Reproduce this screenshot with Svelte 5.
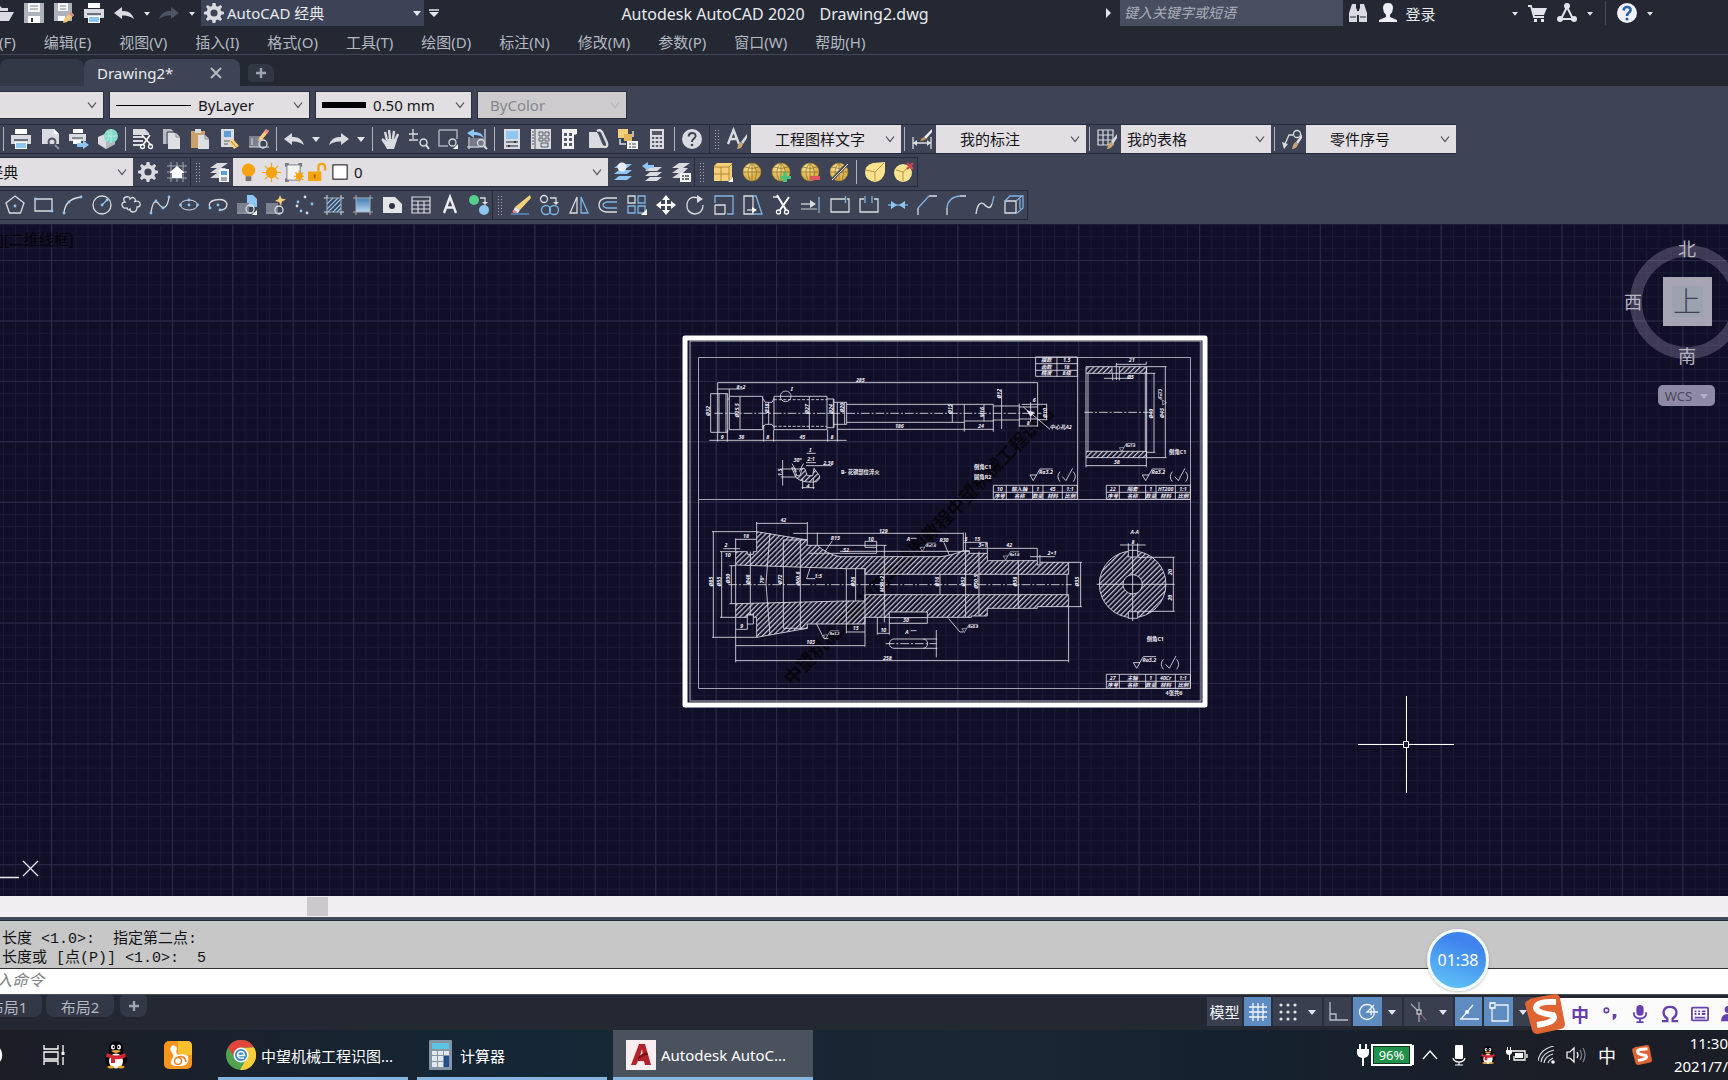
<script lang="ts">
  type Tool = { icon: string; label: string; kind?: "caret" | "sep" };

  const LIGHT = "#d9dbe0";
  const BLUE = "#8ec5f3";
  const GOLD = "#f6cf7a";
  const AMBER = "#f5a310";
  const SLATE = "#3e4455";

  // fill / stroke helpers for the 20x20 icon set
  const f = (d: string, c = LIGHT) => `<path d="${d}" fill="${c}" stroke="none"/>`;
  const s = (d: string, c = LIGHT, w = 1.3) => `<path d="${d}" fill="none" stroke="${c}" stroke-width="${w}"/>`;
  const dot = (x: number, y: number, c = BLUE, r = 1.4) => `<circle cx="${x}" cy="${y}" r="${r}" fill="${c}" stroke="none"/>`;
  const ring = (x: number, y: number, r: number, c = LIGHT, w = 1.3) =>
    `<circle cx="${x}" cy="${y}" r="${r}" fill="none" stroke="${c}" stroke-width="${w}"/>`;

  const undo = "M0 10L8 4V8Q17 7 20 16Q15 12 8 12.500V16Z";
  const redo = "M20 10L12 4V8Q3 7 0 16Q5 12 12 12.500V16Z";
  const gear =
    "M8.500 0H11.500L12 3L14 3.800L16.500 2L18.200 3.800L16.400 6.200L17.200 8.300L20 8.700V11.300L17.200 11.800L16.400 13.800L18 16.300L16.300 18L13.800 16.400L11.900 17.200L11.400 20H8.600L8.100 17.200L6 16.400L3.700 18L1.900 16.200L3.600 13.800L2.800 11.800L0 11.300V8.700L2.800 8.200L3.600 6.100L2 3.700L3.800 2L6.100 3.700L8.100 2.900Z";
  const layers = (c: string) => f("M6 2H19L14 6H1Z", c) + f("M6 8H19L14 12H1Z", c) + f("M6 14H19L14 18H1Z", c);
  const stack = f("M8 1H19L12 6H1Z M8 6H17L12 11H1Z M8 11H14L12 16H1Z");
  const globe =
    `<circle cx="10" cy="10" r="9" fill="url(#gold)" stroke="#a88427" stroke-width=".5"/>` +
    s("M1 10H19M10 1V19M10 1Q3 8 8 18M10 1Q17 8 13 18M3 5Q10 8 17 5", "#94752a", 0.8);
  const search = ring(14.5, 13.5, 3.5, LIGHT, 1.5) + s("M17 16L20 20", LIGHT, 2);
  const brush = f("M20 5L14 13L16 15L20 9Z") + f("M14 13Q11 14 10 20Q15 20 16 15Z", "#c8a475");

  const icons: Record<string, string> = {
    open: f("M0 3H6L8 5H14V8H4L0 15Z") + f("M5 9H20L15 18H0Z"),
    save: f("M0 0H20V20H0Z", "#aeb2ba") + f("M4 0H16V9H4Z", "#f4f4f6") + s("M6 3H14M6 6H14", "#888", 1) + f("M4 13H16V20H4Z", "#fff") + f("M7 15H9V19H7Z", "#333"),
    saveas: f("M0 0H18V18H0Z", "#aeb2ba") + f("M4 0H14V8H4Z", "#f4f4f6") + s("M6 3H12M6 6H12", "#888", 1) + f("M4 13H11V18H4Z", "#fff") + f("M10 16L17 9L20 12L13 19L9 20Z", "#f2c879") + f("M17 9L20 12L18 14L15 11Z", "#d88"),
    print: f("M4 0H16V5H4Z", "#fff") + f("M0 6H20V15H0Z") + f("M3 10H17V12H3Z", "#6a7080") + f("M4 13H16V20H4Z", "#fff") + f("M5 14H15V19H5Z", BLUE),
    undo: f(undo),
    redo: f(redo),
    redoDim: f(redo, "#4c5362"),
    gear: f(gear) + `<circle cx="10" cy="10" r="3.600" fill="${SLATE}" stroke="none"/>`,
    home: s("M0 4H20M0 10H20M0 16H20M4 0V20M10 0V20M16 0V20", "#a3a7b2", 1) + f("M10 4L17 10V11H15V16H5V11H3V10Z", "#fff"),
    preview: f("M2 0H14L19 5V15H2Z") + f("M14 0V5H19Z", "#fff") + ring(12, 13, 3.5, "#4d5362", 2) + s("M15 16L19 20", "#8d929e", 2),
    publish: f("M4 0H14V4H4Z", "#fff") + f("M0 5H17V12H0Z") + s("M3 9H14", "#6a7080", 1.5) + f("M4 11H12V15H4Z", "#fff") + f("M8 14H14V11L20 16L14 20V18H8Z", BLUE),
    cube3d: f("M0 8L9 4L17 8V15L8 20L0 15Z") + f("M8 12L17 8V15L8 20Z", "#b4b7be") + dot(13, 7, "#86dac8", 7) + s("M7 7H19M13 0V14M9 2Q13 6 9 12", "#c6f3e9", 0.7),
    cut: f("M0 0H12L16 4V6H0Z") + s("M0 8H11M0 12H10M0 16H9", LIGHT, 2) + s("M9 6L18 16M17 6L10 16", "#fff", 1.6) + ring(9.5, 17.5, 2, "#fff") + ring(17.500, 17.5, 2, "#fff"),
    copyclip: f("M1 0H9L12 3V15H1Z", "#b9bcc4") + s("M5 17V3H12", SLATE, 1) + f("M6 4H14L18 8V20H6Z", "#dedfe3") + s("M14 4V8H18", "#888", 1),
    paste: f("M0 2H14V19H0Z", "#c9a06c") + f("M4 0H10V4H4Z") + f("M7 6H14L18 10V20H7Z", "#dedfe3") + s("M14 6V10H18", "#888", 1),
    match: f("M1 0H14V18H1Z") + f("M4 2H11V8H4Z", "#5c9fdb") + s("M4 12H10M4 15H8", "#555", 1) + f("M9 13L13 10L19 17L14 20Z", GOLD) + s("M11 12L17 19", "#a67f3f", 1),
    blockedit: f("M0 7H12V18H0Z", "#7b818e") + s("M0 18H20M3 9V16", LIGHT, 1) + ring(14, 15, 4) + f("M10 9L17 0L20 2L13 11L9 12Z", GOLD) + f("M15 3L17 0L20 2L18 5Z", "#e58a85"),
    hand: s("M7 11L5 3M10 10L9 1M13 10L14 2M15 12L18 5M7 14L2 10", LIGHT, 2.4) + f("M6 10H15L17 11L14 20H7Q5 16 2 12L4 11L7 14Z"),
    zoomrt: s("M4 0V10M0 5H9M0 11H9") + search,
    zoomwin: s("M1 1H19V10M1 1V17H10", "#a9adb8", 1.5) + ring(14.5, 13.500, 3.5) + f("M20 15V20H15Z", "#fff"),
    zoomprev: f("M3 9H17V19H3Z", "#747a88") + s("M2 20V8M18 0V18M0 18H12", LIGHT, 1.2) + f("M0 4L7 0V3Q14 2 17 9Q13 6 7 6V9Z", BLUE) + ring(14, 14, 3.5) + s("M17 17L20 20", LIGHT, 2),
    props: f("M2 0H18V20H2Z") + f("M4 2H16V10H4Z", BLUE) + s("M4 13H16M4 17H16", "#5a6070", 1.3) + f("M12 12H14V14H12Z M6 16H8V18H6Z", "#333"),
    design: f("M0 0H20V20H0Z") + s("M4 0V20", "#555", 1) + s("M1 3H3M1 6H3M1 9H3M1 12H3M1 15H3", "#555", 1) + s("M8 3H12V7H8ZM14 3H18V7H14ZM8 9H12V12H8ZM14 9H18V12H14ZM10 14H17V18H10Z", "#555a66", 1),
    palette: f("M2 0H17V5L14 6V20H2Z", "#f2f2f4") + f("M4 4H7V7H4ZM9 4H12V7H9ZM4 9H7V12H4ZM9 9H12V12H9ZM4 14H7V17H4ZM9 14H12V17H9Z", "#555a66"),
    sheets: f("M0 3L8 3L14 19H0Z") + s("M8 2Q11 0 13 3L18 14Q19 18 16 18Q13 18 12 15L8 5", LIGHT, 2.4) + s("M10 5L16 17", "#555a66", 1),
    markup: f("M0 0H10V9H0Z", GOLD) + f("M6 5H14V12H6Z", "#e3b65d") + s("M2 10V15H8M15 2V8", LIGHT, 1.5) + f("M9 12H20V20H9Z", "#f4f4f6") + s("M11 15H13M14 15H18M11 18H13M14 18H18", "#444", 1.2),
    calc: f("M3 0H17V20H3Z") + f("M5 2H15V6H5Z", "#555a66") + s("M5 9H15M5 13H15M5 17H15", "#555a66", 2) + s("M8 7V20M12 7V20", LIGHT, 1.5),
    help: `<circle cx="10" cy="10" r="10" fill="${LIGHT}" stroke="none"/>` + s("M6.500 7.500Q7 4 10 4Q14 4 13.500 7.500Q13 9 11 10.500Q10 11.500 10 13", "#3e4455", 2) + dot(10, 16, "#3e4455", 1.3),
    helpBlue: `<circle cx="10" cy="10" r="10" fill="#f0f2f8" stroke="none"/>` + s("M6.500 7.500Q7 4 10 4Q14 4 13.500 7.500Q13 9 11 10.500Q10 11.500 10 13", "#2d63a8", 2.6) + dot(10, 16, "#2d63a8", 1.6),
    textstyle: s("M1 15L6.500 1L12 15M3 10H10", LIGHT, 2.4) + brush,
    dimstyle: s("M1 8V20M19 8V20M1 14H19") + f("M1 14L5 11V17Z M19 14L15 11V17Z") + f("M20 0L12 8L14 10L20 3Z", "#eee") + f("M12 8Q9 9 8 12Q12 12 14 10Z", "#c8935c"),
    tablestyle: s("M1 1H16V16H1ZM1 6H16M1 11H16M6 1V16M11 1V16", LIGHT, 1.2) + brush,
    mleader: ring(15, 5, 3.5) + s("M11 6H7L3 15") + f("M0 13L6 15L2 20Z") + brush,
    layerprops: stack + f("M10 7H20V20H10Z", "#f4f4f6") + f("M12 9H18V13H12Z", "#5c9fdb") + s("M12 16H18M12 18H18", "#555", 1),
    bulb: dot(10, 7.500, AMBER, 7) + f("M7 14H13V19H7Z", "#77736c"),
    sun: dot(10, 10, AMBER, 6) + s("M10 0V20M0 10H20M3 3L17 17M17 3L3 17", AMBER, 1.3),
    freezevp: f("M2 2H16V18H2Z", "#f2f1f3") + s("M2 2H16V18H2Z", "#777b86", 1) + f("M0 0H4V2H2V4H0ZM14 0H18V4H16V2H14ZM0 16H2V18H4V20H0Z", "#777b86") + dot(15, 14, AMBER, 3.500) + s("M15 8V20M9 14H20M11 10L19 18M19 10L11 18", AMBER, 1.2),
    unlock: f("M0 9H14V19H0Z", AMBER) + s("M11 9V4Q11 1 14.500 1Q18 1 18 4V8", AMBER, 2.4) + f("M6 12H8V16H6Z", "#a96b00"),
    swatch: `<rect x="2" y="2" width="15" height="15" fill="#fff" stroke="#000" stroke-width="1"/>`,
    laymatch: layers(BLUE) + dot(9, 5, "#e8eef5", 4.5),
    layprev: f("M8 5H20L15 9H3Z M8 10H20L15 14H3Z M8 15H20L15 19H3Z") + f("M0 4L6 0V3H12V6H6V9Z", BLUE),
    laystate: stack + f("M9 11H20V20H9Z", "#f4f4f6") + s("M11 14H13M14 14H18M11 17H13M14 17H18", "#444", 1.3),
    box: f("M1 4L4 1H19V16L16 19H1Z", GOLD) + s("M1 5H16V19M16 5L19 2M8 5V19M1 12H16", "#b08a35", 1) + f("M20 15V20H15Z", "#fff"),
    globe,
    globeAdd: globe + f("M12 10H16V14H20V17H16V20H12V17H9V14H12Z", "#4ec07a"),
    globeDel: globe + f("M10 14H20V18H10Z", "#e0565e"),
    globeEdit: globe + s("M2 19L19 1", "#3e4455", 3) + s("M3 18L19 2", "#e6e8ec", 1),
    ball: f("M0 11Q0 3 8 1L20 0V10Q18 19 10 20Q1 19 0 11Z", "#fbe28f") + s("M10 10L19 1M10 10L1 8M10 10V19", "#b08a35", 0.9),
    ballDel: dot(9, 11, "#fbe28f", 9) + s("M9 10L15 5M9 10L2 8M9 10V19", "#b08a35", 0.9) + s("M13 1L19 7M19 1L13 7", "#c9474f", 2.4),
    polygon: s("M10 1L19 8L15.500 18H4.500L1 8Z") + dot(10, 11),
    rect: s("M1 4H18V16H1Z") + dot(1.500, 4) + dot(18, 16),
    arc: s("M1 18Q2 4 18 2") + dot(1, 18) + dot(6, 7) + dot(18, 2),
    circle: ring(10, 10, 9) + s("M10 10L15 5", BLUE, 1.2) + dot(10, 10) + dot(15, 5),
    cloud: s("M6 13Q2 14 1 10Q1 7 4 7Q1 3 5 2Q9 1 9 4Q12 1 14 4Q15 6 13 7Q17 5 19 8Q20 12 16 12Q16 17 12 17Q9 17 9 14Q7 16 6 13Z"),
    spline: s("M1 18Q3 3 8 8Q12 14 15 12Q18 10 19 2") + dot(1, 18) + dot(6, 6) + dot(13, 13) + dot(19, 2),
    ellipse: `<ellipse cx="10" cy="10" rx="8.500" ry="5" fill="none"/>` + dot(10, 10) + dot(1.500, 10) + dot(10, 5) + dot(18.500, 10),
    ellarc: s("M2 13Q-1 7 7 5Q17 3 19 9Q19 15 12 15") + dot(2, 13) + dot(10, 10) + dot(12, 15),
    insert: f("M10 0H16L20 4V12H10Z", BLUE) + f("M0 8H12V17H0Z", "#7b818e") + s("M0 18H20", LIGHT, 1) + ring(13, 14, 4) + f("M20 15V20H15Z", "#fff"),
    makeblock: f("M0 8H12V17H0Z", "#7b818e") + s("M0 18H16", LIGHT, 1) + ring(13, 15, 4) + f("M14 0L15.500 3.500L20 4.500L16 6.500L15 11L13 7L9 6L12.500 4Z", GOLD),
    point: dot(10, 2, LIGHT) + dot(3, 7) + dot(17, 9) + dot(2, 11, LIGHT) + dot(6, 16) + dot(12, 18, LIGHT),
    hatch: s("M3 3H17V17H3Z", "#a9adb8", 1) + s("M0 3H3V0M20 3H17V0M0 17H3V20M20 17H17V20", LIGHT, 1) + s("M3 9L9 3M3 14L14 3M4 17L17 4M9 17L17 9M13 17L17 13", BLUE, 1.1),
    gradient: `<rect x="3" y="3" width="14" height="14" fill="url(#fade)" stroke="none"/>` + s("M0 3H20M0 17H20M3 0V20M17 0V20", "#a9adb8", 1),
    region: f("M1 2H13L20 9V18H1Z", "#e4e5e9") + dot(10, 11, "#30333f", 3),
    table: s("M1 2H19V18H1ZM1 6H19M1 10H19M1 14H19M7 6V18M13 6V18", LIGHT, 1.2),
    mtext: s("M4 18L10 2L16 18M6 12.500H14", "#eceef2", 2.4),
    addsel: dot(5, 5, "#56ce8c", 5) + dot(15, 15, BLUE, 5) + s("M11 3H16V8") + f("M13 7H19L16 10Z"),
    erase: f("M19 0L20 3L9 15L4 12Z", GOLD) + f("M4 12L9 15L7 18L2 17Z", "#eee") + f("M2 15Q0 18 5 18L6 16Z", "#ed7f88") + s("M0 19H18", "#5d9fd4", 1.2),
    copy: ring(4, 4, 3.500) + ring(6, 15, 4.500, "#7fb4e4") + ring(14, 15, 4.500, "#7fb4e4") + s("M10 3H16V7") + f("M13 7H19L16 10Z"),
    mirror: s("M8 2V18H1Z") + s("M12 2V18H19Z", "#7fb4e4"),
    offset: s("M19 3H8Q1 4 1 10Q1 16 8 17H19") + s("M19 7H9Q5 8 5 10Q5 12 9 13H19", "#7fb4e4"),
    array: s("M1 1H8V8H1Z") + s("M11 1H18V8H11ZM1 11H8V18H1ZM11 11H18V18H11Z", "#7fb4e4") + f("M20 14V20H14Z", "#fff"),
    move: s("M10 2V18M2 10H18", "#fff", 2) + f("M10 0L14 5H6ZM10 20L14 15H6ZM0 10L5 6V14ZM20 10L15 6V14Z", "#fff"),
    rotate: s("M13 3Q4 0 2 9Q1 18 10 19Q18 18 18 10") + f("M12 0L18 4L12 8Z"),
    scale: s("M1 10H11V19M1 10V19H11") + s("M1 8V1H19V19H13", "#7fb4e4"),
    stretch: s("M1 1H10V19H1Z") + s("M10 1H13L19 19H10", "#7fb4e4") + f("M9 12L14 15L9 18Z", "#fff") + s("M4 15H10"),
    trim: s("M1 2H7", "#fff", 1.3) + s("M5 0L14 15M17 2L8 15", "#fff", 2) + ring(6.500, 17, 2, "#fff") + ring(14.500, 17, 2, "#fff"),
    extend: s("M0 14H16", "#a9adb8", 1.3) + s("M0 9H10") + f("M9 5L15 9L9 13Z") + s("M18 2V18", "#7fb4e4"),
    breakpt: s("M15 4H1V17H19V4H17") + s("M15.500 1V8", "#7fb4e4"),
    break: s("M5 4H1V17H19V4H15") + s("M6 1V8M13 1V8", "#7fb4e4"),
    join: s("M0 10H20", "#7fb4e4", 1.3) + f("M3 6L9 10L3 14ZM17 6L11 10L17 14Z", BLUE),
    chamfer: s("M1 20V13M12 1H20") + s("M1 13L12 1", "#7fb4e4"),
    fillet: s("M1 20V13M14 1H20") + s("M1 13Q2 2 14 1", "#7fb4e4"),
    blend: s("M1 19Q3 5 9 9Q15 16 17 9") + s("M17 9L19 1", "#7fb4e4"),
    explode: s("M1 6H12V18H1Z") + s("M1 6L6 1H19V13L13 18M12 6L18 1M16 4V14", "#7fb4e4"),
    grid: s("M5 1V19M10 1V19M15 1V19M1 5H19M1 10H19M1 15H19", "#f2f5fa", 1.3),
    snap: [3, 10, 17].map((y) => [3, 10, 17].map((x) => dot(x, y, "#e2e4ea", 1.6)).join("")).join(""),
    ortho: s("M2 0V18H20", "#b9bdc8", 1.3) + s("M2 12H8V18", "#b9bdc8", 1.3),
    polar: ring(9, 10, 7.500, "#eef3fa") + s("M20 10H9L16 3M12 6Q14 8 13 13", "#eef3fa", 1.3),
    iso: s("M2 2L10 10M10 0V20", "#a9adb8", 1.2) + s("M10 10L17 18", "#8d6262", 1.2) + `<rect x="8" y="8" width="4" height="4" fill="${SLATE}" stroke="#e2e4ea"/>`,
    otrack: s("M1 17H20M2 17L14 3", "#eef3fa", 1.3) + dot(8, 10, "#fff", 2),
    osnap: s("M3 6V19H19V3H7", "#eef3fa", 1.3) + s("M1 1H6V6H1Z", "#fff", 1.3),
  };

  const sep: Tool = { icon: "", label: "", kind: "sep" };
  const t = (icon: string, label: string): Tool => ({ icon, label });
  const caret = (label: string): Tool => ({ icon: "", label, kind: "caret" });

  const quick = [
    t("open", "打开"), t("save", "保存"), t("saveas", "另存为"), t("print", "打印"),
    t("undo", "放弃"), caret("放弃列表"), t("redoDim", "重做"), caret("重做列表"),
  ];
  const menus = [
    "文件(F)", "编辑(E)", "视图(V)", "插入(I)", "格式(O)", "工具(T)",
    "绘图(D)", "标注(N)", "修改(M)", "参数(P)", "窗口(W)", "帮助(H)",
  ];
  const standard = [
    t("print", "打印"), t("preview", "打印预览"), t("publish", "发布"), t("cube3d", "三维打印"), sep,
    t("cut", "剪切"), t("copyclip", "复制"), t("paste", "粘贴"), t("match", "特性匹配"), t("blockedit", "块编辑器"), sep,
    t("undo", "放弃"), caret("放弃列表"), t("redo", "重做"), caret("重做列表"), sep,
    t("hand", "平移"), t("zoomrt", "实时缩放"), t("zoomwin", "窗口缩放"), t("zoomprev", "上一个"), sep,
    t("props", "特性"), t("design", "设计中心"), t("palette", "工具选项板"), t("sheets", "图纸集"),
    t("markup", "标记集"), t("calc", "快速计算器"), sep, t("help", "帮助"),
  ];
  const styles = [
    { icon: "textstyle", label: "文字样式", value: "工程图样文字", pad: "wide" },
    { icon: "dimstyle", label: "标注样式", value: "我的标注", pad: "wide" },
    { icon: "tablestyle", label: "表格样式", value: "我的表格", pad: "" },
    { icon: "mleader", label: "多重引线样式", value: "零件序号", pad: "wide" },
  ];
  const layerTools = [t("laymatch", "置为当前"), t("layprev", "上一个图层"), t("laystate", "图层状态")];
  const visual = [
    t("box", "长方体"), t("globe", "球面"), t("globeAdd", "附着"), t("globeDel", "拆离"),
    t("globeEdit", "编辑"), sep, t("ball", "材质"), t("ballDel", "删除材质"),
  ];
  const draw = [
    t("polygon", "多边形"), t("rect", "矩形"), t("arc", "圆弧"), t("circle", "圆"), t("cloud", "修订云线"),
    t("spline", "样条曲线"), t("ellipse", "椭圆"), t("ellarc", "椭圆弧"), t("insert", "插入块"),
    t("makeblock", "创建块"), t("point", "点"), t("hatch", "图案填充"), t("gradient", "渐变色"),
    t("region", "面域"), t("table", "表格"), t("mtext", "多行文字"), t("addsel", "添加选定对象"),
  ];
  const modify = [
    t("erase", "删除"), t("copy", "复制"), t("mirror", "镜像"), t("offset", "偏移"), t("array", "阵列"),
    t("move", "移动"), t("rotate", "旋转"), t("scale", "缩放"), t("stretch", "拉伸"), t("trim", "修剪"),
    t("extend", "延伸"), t("breakpt", "打断于点"), t("break", "打断"), t("join", "合并"),
    t("chamfer", "倒角"), t("fillet", "圆角"), t("blend", "光顺曲线"), t("explode", "分解"),
  ];

  // [x, y, text, rotated] in the units of each view
  type Label = [number, number, string, number?];
  const shaftLabels: Label[] = [
    [571, 170, "285"], [213, 191, "8×2"], [157, 343, "9"], [214, 343, "36"], [293, 343, "8"], [397, 343, "45"],
    [486, 343, "8"], [688, 310, "186"], [933, 310, "24"], [1075, 299, "8"], [1093, 232, "6"],
    [121, 258, "Ø32", 1], [208, 256, "Ø25.5", 1], [296, 250, "Ø18", 1], [417, 252, "Ø27", 1], [488, 252, "Ø24", 1],
    [523, 248, "Ø20", 1], [846, 252, "Ø15", 1], [942, 262, "M16", 1], [992, 206, "Ø12", 1], [1130, 264, "Ø10", 1],
    [1172, 312, "中心孔A2"], [365, 197, "I"], [421, 380, "I"], [423, 409, "2:1"], [383, 412, "30°"],
    [475, 421, "2.36"], [335, 442, "1.5", 1], [414, 488, "4"],
  ];
  const sleeveLabels: Label[] = [
    [395, 112, "21"], [391, 162, "Ø5"], [350, 418, "38"], [460, 266, "Ø40", 1], [493, 264, "Ø45", 1],
    [404, 627, "A-A"], [399, 656, "8"], [516, 741, "20", 1], [516, 818, "20", 1],
  ];
  const spindleLabels: Label[] = [
    [280, 67, "42"], [168, 114, "18"], [108, 142, "2"], [113, 172, "10"], [436, 119, "R15"], [580, 98, "129"], [542, 122, "10"],
    [468, 157, "52"], [762, 127, "R30"], [828, 123, "5"], [862, 123, "15"], [878, 142, "3×1"], [958, 141, "42"],
    [1086, 166, "2×1"], [385, 234, "1:5"], [362, 432, "103"], [592, 479, "258"], [497, 391, "15"], [580, 397, "10"], [648, 366, "30"],
    [655, 123, "A"], [651, 401, "A"], [155, 385, "9"],
    [68, 245, "Ø85", 1], [92, 245, "Ø55", 1], [120, 236, "Ø30", 1], [180, 238, "Ø48", 1], [222, 238, "70°", 1],
    [277, 238, "Ø72", 1], [329, 236, "Ø60.6", 1], [495, 245, "Ø26", 1], [581, 252, "M58×2", 1], [746, 245, "Ø16", 1],
    [825, 245, "Ø52", 1], [864, 245, "Ø50.5", 1], [982, 245, "Ø38", 1], [1168, 245, "Ø35", 1],
  ];
</script>

{#snippet ico(name: string)}
  <svg class="ico" viewBox="0 0 20 20" aria-hidden="true">{@html icons[name]}</svg>
{/snippet}

{#snippet chevron()}
  <svg class="chevron" viewBox="0 0 10 10" aria-hidden="true"><path d="M1 2.500L5 7.500L9 2.500" /></svg>
{/snippet}

{#snippet triangle()}
  <svg class="triangle" viewBox="0 0 8 6" aria-hidden="true"><path d="M0 1H8L4 6Z" /></svg>
{/snippet}

{#snippet tools(list: Tool[])}
  {#each list as item}
    {#if item.kind === "sep"}
      <span class="sep"></span>
    {:else if item.kind === "caret"}
      <button class="drop" type="button" aria-label={item.label}>{@render triangle()}</button>
    {:else}
      <button class="tool" type="button" aria-label={item.label}>{@render ico(item.icon)}</button>
    {/if}
  {/each}
{/snippet}

{#snippet labels(list: Label[])}
  {#each list as [x, y, text, turned]}
    <text {x} {y} transform={turned ? `rotate(-90 ${x} ${y})` : undefined}>{text}</text>
  {/each}
{/snippet}

{#snippet rough(x: number, y: number, value: string, k: number)}
  <g transform="translate({x} {y}) scale({k})">
    <path d="M0 0H20M0 0L10 17L30 -18H68" />
    <text x="48" y="-2">{value}</text>
  </g>
{/snippet}

{#snippet finish(x: number, y: number)}
  {@render rough(x, y, "Ra3.2", 1)}
  <path transform="translate({x} {y})" d="M90 -10Q78 5 90 20M97 5L108 17L128 -20M130 -10Q142 5 130 20" />
{/snippet}

{#snippet titleBlock(x: number, y: number, row: string[])}
  <g transform="translate({x} {y})">
    <path d="M0 0H252V42H0ZM0 21H252M39 0V42M118 0V42M149 0V42M207 0V42" />
    {#each [19, 78, 133, 178, 230] as cx, i}
      <text x={cx} y="17">{row[i]}</text>
      <text x={cx} y="38">{["序号", "名称", "数量", "材料", "比例"][i]}</text>
    {/each}
  </g>
{/snippet}

{#snippet penguin()}
  <svg class="penguin" viewBox="0 0 24 28" aria-hidden="true">
    <path d="M5 25Q1 24 1 17L5 12Q4 0 12 0Q20 0 19 12L23 17Q24 22 20 23Z" fill="#08080c" />
    <ellipse cx="12" cy="20" rx="7" ry="7.500" fill="#fff" />
    <path d="M3 12Q12 17 21 12L22 16Q16 19 11 18V22H7V17L2 16Z" fill="#d22535" />
    <ellipse cx="9" cy="6" rx="2" ry="2.600" fill="#fff" /><ellipse cx="15" cy="6" rx="2" ry="2.600" fill="#fff" />
    <circle cx="9.500" cy="6" r=".9" /><circle cx="14.500" cy="6" r=".9" />
    <path d="M7 10Q12 8 17 10Q12 14 7 10ZM3 26Q6 23 11 26Q7 29 3 26ZM13 26Q18 23 21 26Q17 29 13 26Z" fill="#f2a32c" />
  </svg>
{/snippet}

{#snippet sogou()}
  <svg class="sogou" viewBox="0 0 40 40" aria-hidden="true">
    <path d="M4 6Q5 4 8 4L30 0Q34 0 35 4L40 30Q40 34 36 35L13 40Q8 40 7 36L0 10Q0 7 4 6Z" fill="#de6433" />
    <path d="M31 8Q11 7 11 14Q12 19 28 21Q33 28 12 31" fill="none" stroke="#fff" stroke-width="6" />
  </svg>
{/snippet}

<div class="app">
  <svg class="defs" aria-hidden="true">
    <defs>
      <radialGradient id="gold" cx=".35" cy=".3"><stop offset="0" stop-color="#fbe9a4" /><stop offset="1" stop-color="#d9b24c" /></radialGradient>
      <linearGradient id="fade" x2="0" y2="1"><stop offset="0" stop-color="#3f7cb4" /><stop offset="1" stop-color="#b8d6ef" /></linearGradient>
    </defs>
  </svg>

  <header class="titlebar">
    <div class="quick">{@render tools(quick)}</div>
    <label class="workspace">
      {@render ico("gear")}
      <select aria-label="工作空间"><option>AutoCAD 经典</option></select>
      {@render triangle()}
    </label>
    <button class="customize" type="button" aria-label="自定义快速访问工具栏">
      <svg viewBox="0 0 10 8"><path d="M0 1H10" stroke-width="1.500" /><path d="M0 3H10L5 8Z" stroke="none" /></svg>
    </button>
    <h1><span>Autodesk AutoCAD 2020</span><span>Drawing2.dwg</span></h1>
    <div class="infocenter">
      <svg class="play" viewBox="0 0 5 10"><path d="M0 0L5 5L0 10Z" /></svg>
      <input type="search" placeholder="键入关键字或短语" aria-label="搜索" />
      <button class="tool" type="button" aria-label="查找">
        <svg class="ico" viewBox="0 0 20 20"><path d="M4 1H8V5L9 7V19H1V10ZM12 1H16L19 10V19H11V7L12 5ZM9 8H11V12H9Z" fill="#d9dbe0" stroke="none" /><path d="M2 14H8M12 14H18" stroke="#232833" stroke-width="1" /></svg>
      </button>
      <button class="signin" type="button">
        <svg class="ico" viewBox="0 0 20 20"><path d="M10 0Q15 0 15 5Q15 9 12 12V14L19 17V19H1V17L8 14V12Q5 9 5 5Q5 0 10 0Z" fill="#eceef2" stroke="none" /></svg>
        登录
      </button>
      <button class="drop" type="button" aria-label="登录选项">{@render triangle()}</button>
      <button class="tool" type="button" aria-label="应用商店">
        <svg class="ico" viewBox="0 0 20 20"><path d="M1 3H4L7 14H17" fill="none" stroke="#e2e4ea" stroke-width="1.800" /><path d="M5 5H20L17 12H7ZM7 16H10V19H7ZM14 16H17V19H14Z" fill="#e2e4ea" stroke="none" /></svg>
      </button>
      <button class="tool" type="button" aria-label="保持连接">
        <svg class="ico" viewBox="0 0 20 20"><path d="M10 4L4 16H16Z" fill="none" stroke="#e2e4ea" stroke-width="2" /><circle cx="10" cy="3" r="3" fill="#e2e4ea" stroke="none" /><circle cx="3" cy="16" r="3" fill="#e2e4ea" stroke="none" /><circle cx="17" cy="16" r="3" fill="#e2e4ea" stroke="none" /></svg>
      </button>
      <button class="drop" type="button" aria-label="连接选项">{@render triangle()}</button>
      <span class="rule"></span>
      <button class="tool" type="button" aria-label="帮助">{@render ico("helpBlue")}</button>
      <button class="drop" type="button" aria-label="帮助选项">{@render triangle()}</button>
    </div>
  </header>

  <nav class="menubar">
    {#each menus as menu}
      <button type="button">{menu}</button>
    {/each}
  </nav>

  <div class="filetabs">
    <span class="filetab idle"></span>
    <div class="filetab">
      <span>Drawing2*</span>
      <button type="button" aria-label="关闭">
        <svg viewBox="0 0 12 12"><path d="M1 1L11 11M11 1L1 11" /></svg>
      </button>
    </div>
    <button class="newtab" type="button" aria-label="新图形">
      <svg viewBox="0 0 12 12"><path d="M6 1V11M1 6H11" /></svg>
    </button>
  </div>

  <div class="panel">
    <div class="row properties">
      <label class="combo color"><select aria-label="颜色"><option></option></select>{@render chevron()}</label>
      <label class="combo linetype">
        <span class="line"></span>
        <select aria-label="线型"><option>ByLayer</option></select>{@render chevron()}
      </label>
      <label class="combo weight">
        <span class="line thick"></span>
        <select aria-label="线宽"><option>0.50 mm</option></select>{@render chevron()}
      </label>
      <label class="combo plot off"><select aria-label="打印样式" disabled><option>ByColor</option></select>{@render chevron()}</label>
    </div>

    <div class="row">
      <div class="toolbar standard"><span class="sep"></span>{@render tools(standard)}</div>
      <div class="toolbar">
        <span class="grip"></span>
        {#each styles as style, i}
          {#if i > 0}<span class="sep"></span>{/if}
          <button class="tool" type="button" aria-label={style.label}>{@render ico(style.icon)}</button>
          <label class="combo style {style.pad}">
            <select aria-label={style.label}><option>{style.value}</option></select>{@render chevron()}
          </label>
        {/each}
      </div>
    </div>

    <div class="row">
      <div class="toolbar spaces">
        <label class="combo"><select aria-label="工作空间列表"><option>AutoCAD 经典</option></select>{@render chevron()}</label>
        {@render tools([t("gear", "工作空间设置"), t("home", "我的工作空间")])}
      </div>
      <div class="toolbar">
        <span class="grip"></span>
        {@render tools([t("layerprops", "图层特性")])}
        <label class="combo layer">
          {#each ["bulb", "sun", "freezevp", "unlock", "swatch"] as name}{@render ico(name)}{/each}
          <select aria-label="图层"><option>0</option></select>{@render chevron()}
        </label>
        {@render tools(layerTools)}
      </div>
      <div class="toolbar"><span class="grip"></span>{@render tools(visual)}</div>
    </div>

    <div class="row">
      <div class="toolbar">{@render tools(draw)}</div>
      <div class="toolbar"><span class="grip"></span>{@render tools(modify)}</div>
    </div>
  </div>

  <main class="canvas">
    <svg class="model" aria-label="模型空间">
      <defs>
        <pattern id="minor" x="51.300" y="36.300" width="12.083" height="12.083" patternUnits="userSpaceOnUse">
          <path d="M.5 0V12.083M0 .5H12.083" stroke="#1c1936" />
        </pattern>
        <pattern id="major" x="51" y="36" width="60.417" height="60.417" patternUnits="userSpaceOnUse">
          <path d="M.5 0V60.417M0 .5H60.417" stroke="#2c2948" />
        </pattern>
        <pattern id="section" width="11" height="11" patternUnits="userSpaceOnUse" patternTransform="rotate(45)">
          <path d="M2 0V11" stroke="#e6e4ee" stroke-width="3.200" />
        </pattern>
      </defs>
      <rect width="100%" height="100%" fill="url(#minor)" />
      <rect width="100%" height="100%" fill="url(#major)" />

      <text class="watermark" transform="translate(792 462) rotate(-46)">中望机械工程识图与绘图教程中望机械工程识图</text>

      <rect x="685" y="114" width="520" height="367" fill="none" stroke="#fff" stroke-width="5" stroke-linejoin="round" />
      <rect x="690" y="117" width="511" height="360" fill="none" stroke="#b5b3c0" />
      <path d="M698.500 133.500H1190.500V464.500H698.500ZM698.500 275.500H1190.500M1077.500 133.500V275.500" fill="none" stroke="#a3a1b2" />

      <!-- input shaft -->
      <g class="view" transform="translate(670 101) scale(.3333)">
        <path d="M1097 96H1222V154H1097ZM1097 116H1222M1097 136H1222M1161 96V154" />
        <path d="M143 173H1103M143 173V350M1103 173V305M122 206H173V322H122ZM147 206V322M168 206V322M178 192V214M143 192H220" />
        <path d="M173 222H178M178 214H278V314H178ZM278 220L286 232H306L312 220M278 308L286 298H306L312 308M312 214H471V314H312ZM471 222H492V308H471M492 232H530V298H492M502 232V350M530 238H883M530 292H883M883 238H970V288H883ZM970 243H1048M970 285H1048M1048 246H1103M1048 282H1103M1048 236V305" />
        <path d="M118 346H530M172 314V350M281 300V350M311 314V350M473 314V350M502 313H970M883 288V320M970 285V320M1048 303H1103M1055 238H1130M1130 236V284M1103 284H1132M1060 246L1140 313" />
        <path d="M210 216V312M296 232V298M418 214V314M490 222V306M524 232V298M847 238V292M942 238V290M995 193V312M1082 232V290" />
        <path d="M312 224H471M312 304H471" stroke-dasharray="9 5" />
        <path d="M133 265H1115" stroke-dasharray="26 6 6 6" />
        <circle cx="347" cy="214" r="16" />
        <path d="M1072 258L1092 262L1082 274Z" fill="#e4e2ec" />
        <path d="M365 428L378 458Q400 476 440 470Q456 458 444 446L432 430L428 452H412L404 430H396L390 452H380L374 430Z" fill="url(#section)" />
        <path d="M410 385H437M408 413H438M338 405V482M332 432H400M332 456H380M398 460V492M430 460V492M395 488H434M408 422H485M366 416L380 440M400 416L388 440" />
        {@render labels(shaftLabels)}
        <text class="note" x="571" y="447">B- 花键部位淬火</text>
        <text class="note" x="938" y="433">倒角C1</text>
        <text class="note" x="938" y="462">圆角R2</text>
        {@render finish(1080, 450)}
        {@render titleBlock(970, 481, ["10", "输入轴", "1", "45", "1:1"])}
        <text x="1129" y="112">模数</text><text x="1190" y="112">1.5</text>
        <text x="1129" y="131">齿数</text><text x="1190" y="131">18</text>
        <text x="1129" y="151">精度</text><text x="1190" y="151">8级</text>
      </g>

      <!-- sleeve and A-A section -->
      <g class="view" transform="translate(1000 101) scale(.3333)">
        <path d="M258 125H336V145H258ZM358 125H439V145H358ZM258 379H439V398H258Z" fill="url(#section)" />
        <path d="M258 145V379M264 145V379M436 145V379M440 125V398M336 125H358M336 145H358" />
        <path d="M439 125H500M439 398H500M496 125V398M439 145H466M439 382H466M462 145V382M258 398V427M439 398V427M258 422H439M349 118H439V110M349 114V165M312 160H400M338 145V166M358 145V166" />
        <path d="M253 262H446" stroke-dasharray="26 6 6 6" />
        {@render rough(358, 368, "Ra1.6", 0.7)}
        <g transform="rotate(-90 494 240)">{@render rough(494, 234, "Ra3.2", 0.7)}</g>
        <text class="note" x="533" y="388">倒角C1</text>
        {@render finish(427, 450)}
        {@render titleBlock(319, 481, ["22", "隔套", "1", "HT200", "1:1"])}

        <circle cx="398" cy="778" r="100" fill="url(#section)" />
        <circle cx="398" cy="778" r="29" fill="#110e28" />
        <path d="M385 676H413V696H385ZM385 860H413V880H385Z" fill="#110e28" />
        <path d="M290 778H524M398 660V888M414 697H524M414 859H524M520 697V859M360 660H437M385 655V676M413 655V676" />
        {@render labels(sleeveLabels)}
        <text class="note" x="466" y="947">倒角C1</text>
        {@render finish(400, 1013)}
        {@render titleBlock(319, 1048, ["27", "主轴", "1", "40Cr", "1:1"])}
        <text class="note" x="522" y="1110">4张共6</text>
      </g>

      <!-- spindle -->
      <g class="view" transform="translate(690 276) scale(.3333)">
        <path d="M137 195V155H172V163H190V155H200V95L352 120V136H382Q410 162 450 170H750Q780 168 820 152H838V160H892V182H1042V195H1050V187H1136V223H525V206H469Z" fill="url(#section)" />
        <path d="M137 311L469 303H525V284H1136V320H1042V325H892V348H844V352H525V372H352V385L200 412V352H190V343H172V352H137Z" fill="url(#section)" />
        <path d="M172 345H190V372H172ZM598 336H712V353H598Z" fill="#110e28" />
        <path d="M137 195V311M469 206V303M525 206V440M1131 223V284M181 155V345M240 100L228 250L240 405M280 120V385M331 120V385M497 206V303M583 136V367M750 223V284M827 98V352M867 155V348M985 182V325M280 120H352M280 385H352" />
        <path d="M115 254H1145" stroke-dasharray="26 6 6 6" />
        <path d="M200 66V95M352 66V120M200 70H352M382 98V136M820 98V152M382 100H820M310 100H382M137 115V155M137 118H200M100 146H150M355 160H560M382 136H590M450 154H838M525 124H560V160M525 142H560M525 124V142M820 127H892V160M838 145H892M892 145H1042V182M1020 170H1095M1050 165V187" />
        <path d="M70 95V412M66 95H200M66 412H200M95 155V352M90 155H137M90 352H137M124 197V311M118 197H137M118 311H137M1172 187V320M1136 187H1176M1136 320H1176" />
        <path d="M137 352V487M137 437H525M137 482H1136M1136 320V487M469 303V400M469 396H525M137 388H172V372M562 352V404M598 353V404M562 400H598M598 370H712V353" />
        <path d="M427 122L405 155M762 128L778 165M360 205L350 236H375M380 372L402 416H415M776 356L810 396H820M662 115H680M662 392H680" />
        <rect x="598" y="417" width="115" height="28" rx="14" />
        <path d="M587 431H740" stroke-dasharray="26 6 6 6" />
        <path d="M700 417H742M700 445H742M739 390V472" />
        {@render rough(690, 142, "Ra1.6", 0.7)}
        {@render rough(940, 168, "Ra1.6", 0.7)}
        {@render rough(400, 405, "Ra3.2", 0.7)}
        {@render rough(816, 386, "Ra0.8", 0.7)}
        {@render labels(spindleLabels)}
      </g>

      <path d="M1358 520.500H1403M1409 520.500H1454M1406.500 472V517M1406.500 524V569M1403.500 517.500H1408.500V523.500H1403.500Z" fill="none" stroke="#fff" />
    </svg>

    <span class="viewmode">][二维线框]</span>

    <div class="viewcube">
      <svg class="compass" viewBox="0 0 116 128">
        <circle cx="58" cy="64" r="51" fill="none" stroke="#a9a3bd" stroke-opacity=".3" stroke-width="12" />
        <rect x="34" y="39" width="49" height="49" fill="#a7a4b4" />
        <rect x="43" y="48" width="31" height="31" fill="#9da2af" />
        <text x="58" y="74" class="top">上</text>
        <text x="58" y="18">北</text>
        <text x="4" y="71">西</text>
        <text x="58" y="125">南</text>
      </svg>
      <button type="button">WCS {@render triangle()}</button>
    </div>

    <svg class="ucs" viewBox="0 0 40 20"><path d="M0 17.500H19M23 1L38 16M38 1L23 16" /></svg>
  </main>

  <div class="scrollbar"><span class="thumb"></span></div>

  <section class="command">
    <pre>长度 &lt;1.0&gt;:  指定第二点:
长度或 [点(P)] &lt;1.0&gt;:  5</pre>
    <input type="text" placeholder="键入命令" aria-label="命令行" />
  </section>

  <div class="statusbar">
    <div class="layouts">
      <button type="button">布局1</button>
      <button type="button">布局2</button>
      <button class="add" type="button" aria-label="新建布局"><svg viewBox="0 0 12 12"><path d="M6 1V11M1 6H11" /></svg></button>
    </div>
    <div class="toggles">
      <button class="space" type="button">模型</button>
      <button class="on" type="button" aria-label="栅格">{@render ico("grid")}</button>
      <button type="button" aria-label="捕捉">{@render ico("snap")}</button>
      <button class="more" type="button" aria-label="捕捉选项">{@render triangle()}</button>
      <button type="button" aria-label="正交">{@render ico("ortho")}</button>
      <button class="on" type="button" aria-label="极轴追踪">{@render ico("polar")}</button>
      <button class="more" type="button" aria-label="极轴选项">{@render triangle()}</button>
      <button type="button" aria-label="等轴测草图">{@render ico("iso")}</button>
      <button class="more" type="button" aria-label="等轴测选项">{@render triangle()}</button>
      <button class="on" type="button" aria-label="对象捕捉追踪">{@render ico("otrack")}</button>
      <button class="on" type="button" aria-label="对象捕捉">{@render ico("osnap")}</button>
      <button class="more" type="button" aria-label="对象捕捉选项">{@render triangle()}</button>
    </div>
  </div>

  <footer class="taskbar">
    <button class="launch" type="button" aria-label="Cortana"><svg viewBox="0 0 24 24"><circle cx="12" cy="12" r="10" fill="none" stroke="#fff" stroke-width="2.500" /></svg></button>
    <button class="launch" type="button" aria-label="任务视图">
      <svg viewBox="0 0 24 24"><path d="M2 2V6H16V2M2 22V18H16V22M2 9H16V16H2ZM21 2V9M21 14V22" fill="none" stroke="#fff" stroke-width="1.300" /><path d="M19.500 9H22.500V12H19.500Z" fill="#fff" /></svg>
    </button>
    <button class="launch" type="button" aria-label="QQ">{@render penguin()}</button>
    <button class="launch" type="button" aria-label="UC浏览器">
      <svg class="uc" viewBox="0 0 28 28">
        <rect width="28" height="28" rx="5" fill="#f9951d" /><path d="M14 0H23Q28 0 28 5V14H14Z" fill="#fbc02d" />
        <path d="M9 4Q4 7 8 12Q11 15 8 18Q4 25 13 25H18Q26 24 24 15Q20 12 14 14Q11 11 13 8Q13 5 9 4Z" fill="#fff" />
        <circle cx="14" cy="20" r="3.500" fill="none" stroke="#f07c1c" stroke-width="1.500" /><path d="M14 16Q21 14 22 21" fill="none" stroke="#f07c1c" stroke-width="1.500" />
      </svg>
    </button>
    <button class="task" type="button">
      <svg viewBox="0 0 30 30">
        <circle cx="15" cy="15" r="15" fill="#4fa350" /><path d="M2 7.500A15 15 0 0 1 28 7.500H15L9 18Z" fill="#e2453a" /><path d="M28 7.500A15 15 0 0 1 14 30L21 18L17 8Z" fill="#fbcd3a" />
        <circle cx="15" cy="15" r="7.500" fill="#fff" /><circle cx="15" cy="15" r="6" fill="#3989c9" /><path d="M11.500 15.500H18.500Q18 11.500 15 11.500Q11.500 12 11.500 15.500Q12 19 18 18" fill="none" stroke="#fff" stroke-width="1.600" />
      </svg>
      中望机械工程识图...
    </button>
    <button class="task" type="button">
      <svg viewBox="0 0 30 30">
        <rect x="4" width="23" height="30" rx="1" fill="#8494a5" /><rect x="7" y="3" width="17" height="6" fill="#5ec6e4" />
        <path d="M7 11H12V15H7ZM13 11H18V15H13ZM19 11H24V15H19ZM7 16H12V21H7ZM13 16H18V21H13ZM7 22H12V27H7ZM13 22H18V27H13Z" fill="#e3e8ee" /><rect x="19" y="16" width="5" height="11" fill="#1f4f8c" />
      </svg>
      计算器
    </button>
    <button class="task active" type="button">
      <svg viewBox="0 0 30 30">
        <rect width="30" height="30" fill="#fbeeee" /><path d="M5 25L13 4H19L25 25H19L18 21H12L10 25ZM14 16H17L16 9Z" fill="#b3232b" /><path d="M12 17Q16 13 21 12L22 15Q17 15 12 20Z" fill="#7d1219" />
      </svg>
      Autodesk AutoC...
    </button>

    <div class="tray">
      <svg class="plug" viewBox="0 0 12 24"><path d="M3 1V6M9 1V6" stroke="#fff" stroke-width="2" /><path d="M0 6H12V10Q12 14 7 15V23H5V15Q0 14 0 10Z" fill="#fff" /></svg>
      <span class="battery">96%</span>
      <svg class="up" viewBox="0 0 16 12"><path d="M1 10L8 2L15 10" /></svg>
      <svg class="mic" viewBox="0 0 14 22"><rect x="3" y="1" width="8" height="14" rx="1" fill="#fff" /><path d="M1 14Q2 18 7 18Q12 18 13 14M7 18V21M3 21H11" fill="none" stroke="#fff" stroke-width="1.200" /></svg>
      {@render penguin()}
      <svg class="cell" viewBox="0 0 22 18"><path d="M6 5H19V14H8V10M21 8V12" fill="none" stroke="#fff" stroke-width="1.300" /><path d="M9 7H17V12H9ZM0 4H6V7Q5 9 3 9Q1 9 0 7ZM1 1H2V4H1ZM4 1H5V4H4ZM3 9H4V14H3Z" fill="#fff" /></svg>
      <svg class="wifi" viewBox="0 0 18 18"><path d="M10 17Q11 14 15 12M6 17Q7 10 15 8M3 16Q4 7 16 4M0 15Q2 3 16 0" fill="none" stroke="#dfe2e6" stroke-width="1.200" /><circle cx="15" cy="16" r="1.800" fill="#fff" /></svg>
      <svg class="volume" viewBox="0 0 22 18"><path d="M1 6H4L8 2V16L4 12H1ZM11 6Q13 9 11 12" fill="none" stroke="#fff" stroke-width="1.200" /><path d="M14 4Q17 9 14 14M17 2Q21 9 17 16" fill="none" stroke="#7d828a" stroke-width="1.200" /></svg>
      <span class="ime">中</span>
      {@render sogou()}
    </div>
    <div class="clock"><span>11:30</span><span>2021/7/</span></div>
  </footer>

  <div class="imebar">
    {@render sogou()}
    <button type="button">中</button>
    <button type="button" aria-label="标点"><svg viewBox="0 0 20 20"><circle cx="6" cy="6" r="2.500" fill="none" stroke-width="1.800" /><path d="M13 10H17Q18 15 13 17" fill="#6640ac" stroke="none" /></svg></button>
    <button type="button" aria-label="语音"><svg viewBox="0 0 20 20"><rect x="6" y="0" width="8" height="12" rx="4" fill="#6640ac" stroke="none" /><path d="M3 8Q3 15 10 15Q17 15 17 8M10 15V19M6 19H14" fill="none" stroke-width="2" /></svg></button>
    <button type="button" aria-label="符号"><svg viewBox="0 0 20 20"><path d="M1 18H7V15Q2 12 3 7Q4 2 10 2Q16 2 17 7Q18 12 13 15V18H19" fill="none" stroke-width="2.600" /></svg></button>
    <button type="button" aria-label="软键盘"><svg viewBox="0 0 20 20"><rect x="1" y="3" width="18" height="14" rx="1" fill="none" stroke-width="2" /><path d="M4 7H6M8 7H10M12 7H16M4 10H6M8 10H10M12 10H16M4 14H16" stroke-width="2" /></svg></button>
    <button type="button" aria-label="账户"><svg viewBox="0 0 20 20"><circle cx="8" cy="5" r="4" fill="#6640ac" stroke="none" /><path d="M0 18Q0 10 8 10Q16 10 16 18Z" fill="#6640ac" stroke="none" /></svg></button>
  </div>

  <div class="timer">01:38</div>
</div>

<style>
  :global(body) {
    margin: 0;
    background: #232833;
  }
  .app {
    position: relative;
    display: flex;
    flex-direction: column;
    min-height: 100vh;
    overflow: hidden;
    background: #232833;
    color: #e8eaee;
    font-family: "Noto Sans", "Noto Sans CJK SC", sans-serif;
    font-size: 15px;
  }
  .defs {
    position: absolute;
    width: 0;
    height: 0;
  }
  button,
  select,
  input {
    margin: 0;
    padding: 0;
    border: none;
    background: none;
    color: inherit;
    font: inherit;
  }
  button {
    display: flex;
    align-items: center;
    justify-content: center;
    flex: none;
  }
  select {
    flex: 1;
    min-width: 0;
    appearance: none;
  }
  svg {
    display: block;
    flex: none;
  }
  .ico {
    width: 20px;
    height: 20px;
    fill: none;
    stroke: #d9dbe0;
    overflow: visible;
  }
  .tool {
    width: 29px;
  }
  .drop {
    width: 15px;
  }
  .triangle {
    width: 8px;
    height: 6px;
    fill: #e2e4ea;
  }
  .chevron {
    width: 10px;
    height: 10px;
    fill: none;
    stroke: #4a4a50;
    stroke-width: 1.2;
  }

  .titlebar {
    display: flex;
    height: 28px;
    font-size: 16px;
  }
  .titlebar .drop .triangle {
    width: 6px;
    height: 5px;
  }
  .quick {
    display: flex;
    height: 26px;
    margin-left: -11px;
  }
  .quick .tool {
    width: 30px;
  }
  .workspace {
    display: flex;
    align-items: center;
    gap: 3px;
    width: 217px;
    height: 26px;
    margin-left: 2px;
    padding: 0 3px;
    background: #3d4356;
    font-size: 15px;
  }
  .customize {
    width: 20px;
    height: 26px;
  }
  .customize svg {
    width: 10px;
    height: 8px;
    fill: #e2e4ea;
    stroke: #e2e4ea;
  }
  h1 {
    display: flex;
    flex: 1;
    justify-content: center;
    gap: 15px;
    margin: 0;
    font-size: 16px;
    font-weight: 400;
    line-height: 28px;
  }
  .infocenter {
    display: flex;
    align-items: center;
    height: 26px;
    margin-right: 71px;
  }
  .play {
    width: 5px;
    height: 10px;
    margin-right: 9px;
    fill: #e2e4ea;
  }
  .infocenter input {
    box-sizing: border-box;
    width: 223px;
    height: 26px;
    padding: 0 4px 2px;
    background: #474e60;
    font-size: 14px;
    font-style: italic;
  }
  .infocenter input::placeholder {
    color: #a9aeba;
    opacity: 1;
  }
  .infocenter .tool {
    width: 30px;
  }
  .signin {
    gap: 7px;
    width: 68px;
    font-size: 15px;
  }
  .signin + .drop {
    margin-left: 66px;
  }
  .rule {
    width: 1px;
    height: 24px;
    margin: 0 6px 0 8px;
    background: #474d5b;
  }

  .menubar {
    display: flex;
    gap: 28px;
    height: 26px;
    margin-left: -31px;
    border-bottom: 1px solid #414757;
    color: #b4b8c1;
  }

  .filetabs {
    display: flex;
    align-items: flex-end;
    height: 31px;
  }
  .filetab {
    display: flex;
    align-items: center;
    justify-content: space-between;
    box-sizing: border-box;
    width: 156px;
    height: 27px;
    padding: 0 18px 0 13px;
    border-radius: 8px 8px 0 0;
    background: #3e4455;
  }
  .filetab.idle {
    width: 84px;
    background: #333847;
  }
  .filetab svg {
    width: 12px;
    height: 12px;
    stroke: #b5b9c2;
    stroke-width: 2;
  }
  .newtab {
    width: 26px;
    height: 18px;
    margin: 0 0 4px 8px;
    border-radius: 4px 8px 4px 4px;
    background: #323744;
  }
  .newtab svg,
  .add svg {
    width: 12px;
    height: 12px;
    stroke: #9fa4ae;
    stroke-width: 2.4;
  }

  .panel {
    display: grid;
    gap: 3px;
    padding: 5px 0 4px;
    background: #3e4455;
  }
  .row {
    display: flex;
    height: 30px;
  }
  .toolbar {
    display: flex;
    box-sizing: border-box;
    padding: 1px 0;
    box-shadow: inset -1px 0 #252a38, inset 0 1px #252a38, inset 0 -1px #252a38;
  }
  .sep {
    width: 1px;
    margin: 2px 3px;
    background: #aeb2bc;
  }
  .standard {
    padding-right: 4px;
  }
  .standard .sep {
    margin: 2px 2px 2px 3px;
  }
  .standard .drop {
    width: 16px;
  }
  .grip {
    width: 5px;
    margin: 4px;
    background-image: radial-gradient(circle, #a5a9b4 30%, transparent 40%);
    background-size: 3px 3px;
  }
  .combo {
    display: flex;
    align-items: center;
    box-sizing: border-box;
    padding: 0 6px;
    background: #e1dfe2;
    color: #16161a;
  }
  .properties {
    gap: 5px;
    align-items: flex-start;
    margin-left: -97px;
  }
  .properties .combo {
    width: 201px;
    height: 28px;
    border: 1px solid #2b303d;
  }
  .linetype,
  .weight {
    gap: 7px;
  }
  .properties .weight {
    width: 157px;
  }
  .properties .plot {
    width: 150px;
    padding-left: 12px;
  }
  .off {
    background: #cdcbce;
    color: #86868c;
  }
  .off select {
    opacity: 1;
  }
  .off .chevron {
    stroke: #b4b2b6;
  }
  .line {
    width: 75px;
    height: 1px;
    background: #000;
  }
  .thick {
    width: 44px;
    height: 6px;
  }
  .style {
    width: 150px;
  }
  .style + .sep + .tool,
  .grip + .tool:has(+ .style) {
    width: 28px;
  }
  .wide {
    padding-left: 24px;
  }
  .spaces {
    margin-left: -90px;
  }
  .spaces .combo {
    width: 223px;
    padding-left: 11px;
  }
  .layer {
    gap: 4px;
    width: 375px;
  }
  .layer .ico {
    width: 19px;
    height: 19px;
  }

  .canvas {
    position: relative;
    flex: 1;
    overflow: hidden;
    background: #110e28;
  }
  .model {
    position: absolute;
    inset: 0;
    width: 100%;
    height: 100%;
  }
  .watermark {
    fill: #07060d;
    font-size: 18px;
    font-weight: 700;
  }
  .view {
    fill: none;
    stroke: #dddbe5;
    stroke-width: 2.6;
  }
  .view text {
    fill: #f0eef6;
    stroke: none;
    font-size: 16px;
    font-style: italic;
    font-weight: 700;
    text-anchor: middle;
  }
  .view .note {
    font-style: normal;
  }
  .viewmode {
    position: absolute;
    top: 4px;
    left: -1px;
    color: #05040a;
  }
  .viewcube {
    position: absolute;
    top: 14px;
    right: -17px;
    width: 116px;
  }
  .compass {
    width: 116px;
    height: 128px;
    overflow: visible;
  }
  .compass text {
    fill: #b9b6c3;
    font-size: 18px;
    text-anchor: middle;
  }
  .compass .top {
    fill: #40434f;
    font-size: 28px;
    font-weight: 300;
  }
  .viewcube button {
    gap: 8px;
    width: 57px;
    height: 21px;
    margin: 19px 0 0 29px;
    border-radius: 5px;
    background: #8e8aa5;
    color: #4b475c;
    font-size: 13px;
  }
  .viewcube .triangle {
    fill: #b3afc4;
  }
  .ucs {
    position: absolute;
    bottom: 16px;
    left: 0;
    width: 40px;
    height: 20px;
    fill: none;
    stroke: #e9e8ef;
    stroke-width: 1.3;
  }

  .scrollbar {
    height: 21px;
    background: #f0eef1;
    border-bottom: 3px solid #434958;
  }
  .thumb {
    display: block;
    width: 21px;
    height: 19px;
    margin: 1px 0 0 307px;
    background: #cbc9cc;
  }
  .command {
    border-top: 1px solid #262a36;
    border-bottom: 1px solid #4a4c54;
    background: #c8c7c8;
    color: #141416;
  }
  .command pre {
    margin: 0;
    padding: 9px 2px 0;
    font-family: "Liberation Mono", "Noto Sans CJK SC", monospace;
    font-size: 15px;
    line-height: 19px;
  }
  .command input {
    display: block;
    box-sizing: border-box;
    width: 100%;
    height: 26px;
    padding-bottom: 3px;
    border-top: 1px solid #2e2e34;
    background: #fff;
    font-size: 16px;
    font-style: italic;
    text-indent: -20px;
  }
  .command input::placeholder {
    color: #828286;
    opacity: 1;
  }

  .statusbar {
    display: flex;
    justify-content: space-between;
    height: 35px;
    color: #b4b8c1;
  }
  .layouts {
    display: flex;
    gap: 4px;
  }
  .layouts button {
    width: 68px;
    height: 22px;
    border-radius: 4px 4px 8px 8px;
    background: #333847;
  }
  .layouts button:first-child {
    margin-left: -26px;
  }
  .layouts .add {
    width: 27px;
    margin-left: 2px;
  }
  .toggles {
    display: flex;
    height: 29px;
    margin: 2px 193px 0 0;
  }
  .toggles button {
    width: 29px;
    background: #3a3f50;
    border-right: 2px solid #2b303d;
    box-sizing: border-box;
  }
  .toggles button:has(+ .more) {
    border-right: none;
  }
  .toggles .on {
    background: #5f8cc0;
  }
  .toggles .more {
    width: 22px;
  }
  .toggles .space {
    width: 37px;
    color: #f1f2f5;
  }

  .taskbar {
    display: flex;
    height: 50px;
    background: linear-gradient(90deg, #1c1d25, #152736 30%, #1a2633 60%, #14212f 70%, #1b1e27 90%);
    color: #fff;
  }
  .launch {
    width: 62px;
  }
  .launch:first-child {
    width: 44px;
    margin-left: -21px;
    justify-content: flex-start;
  }
  .launch svg {
    width: 24px;
    height: 24px;
  }
  .launch .penguin {
    height: 28px;
  }
  .launch .uc {
    width: 28px;
    height: 28px;
  }
  .task {
    justify-content: flex-start;
    gap: 5px;
    width: 190px;
    margin-left: 9px;
    padding: 3px 8px 0;
    box-sizing: border-box;
    border-bottom: 3px solid #86b5e0;
  }
  .task svg {
    width: 30px;
    height: 30px;
  }
  .active {
    width: 200px;
    margin-left: 6px;
    padding-left: 13px;
    background: #4a525d;
  }
  .tray {
    display: flex;
    align-items: center;
    gap: 10px;
    margin-left: auto;
  }
  .plug {
    width: 12px;
    height: 24px;
    margin-right: -8px;
  }
  .battery {
    box-sizing: border-box;
    width: 41px;
    height: 22px;
    border: 2px solid #fff;
    background: #1f9149;
    box-shadow: inset 0 0 0 1px #14351f, 3px 0 0 -1px #fff;
    font-size: 13px;
    line-height: 18px;
    text-align: center;
  }
  .up {
    width: 16px;
    height: 12px;
    fill: none;
    stroke: #fff;
    stroke-width: 1.4;
  }
  .mic {
    width: 22px;
    height: 22px;
  }
  .tray .penguin {
    width: 16px;
    height: 20px;
  }
  .cell,
  .volume {
    width: 22px;
    height: 18px;
  }
  .wifi {
    width: 18px;
    height: 18px;
  }
  .ime {
    font-size: 18px;
  }
  .tray .sogou {
    width: 20px;
    height: 20px;
    margin-left: 6px;
  }
  .clock {
    display: grid;
    align-content: center;
    width: 76px;
    line-height: 23px;
    text-align: right;
  }

  .imebar {
    position: absolute;
    right: 0;
    bottom: 50px;
    display: flex;
    align-items: center;
    width: 203px;
    height: 32px;
    background: linear-gradient(90deg, transparent 20px, #fbfbfc 20px);
    color: #6640ac;
    font-size: 18px;
    font-weight: 700;
  }
  .imebar button {
    width: 30px;
  }
  .imebar .sogou {
    width: 40px;
    height: 40px;
  }
  .imebar button svg {
    width: 18px;
    height: 18px;
    stroke: #6640ac;
  }
  .timer {
    position: absolute;
    right: 239px;
    bottom: 89px;
    box-sizing: border-box;
    width: 62px;
    height: 62px;
    border: 3px solid #effbff;
    border-radius: 50%;
    background: linear-gradient(20deg, #63c8f8, #3f84ee 75%);
    box-shadow: 0 1px 3px rgba(0, 0, 0, 0.25);
    color: #fff;
    font-size: 16px;
    line-height: 56px;
    text-align: center;
  }
</style>
